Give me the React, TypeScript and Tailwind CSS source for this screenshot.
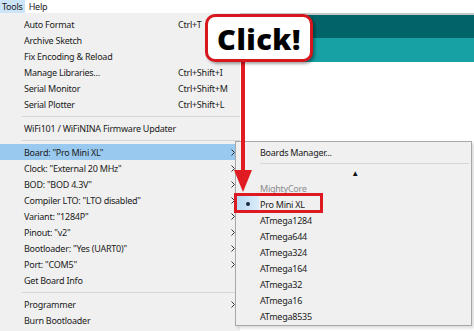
import React from 'react';

type MenuItem =
  | { kind: 'sep' }
  | { kind: 'item'; label: string; shortcut?: string; arrow?: boolean; active?: boolean };

const mainItems: MenuItem[] = [
  { kind: 'item', label: 'Auto Format', shortcut: 'Ctrl+T' },
  { kind: 'item', label: 'Archive Sketch' },
  { kind: 'item', label: 'Fix Encoding & Reload' },
  { kind: 'item', label: 'Manage Libraries...', shortcut: 'Ctrl+Shift+I' },
  { kind: 'item', label: 'Serial Monitor', shortcut: 'Ctrl+Shift+M' },
  { kind: 'item', label: 'Serial Plotter', shortcut: 'Ctrl+Shift+L' },
  { kind: 'sep' },
  { kind: 'item', label: 'WiFi101 / WiFiNINA Firmware Updater' },
  { kind: 'sep' },
  { kind: 'item', label: 'Board: "Pro Mini XL"', arrow: true, active: true },
  { kind: 'item', label: 'Clock: "External 20 MHz"', arrow: true },
  { kind: 'item', label: 'BOD: "BOD 4.3V"', arrow: true },
  { kind: 'item', label: 'Compiler LTO: "LTO disabled"', arrow: true },
  { kind: 'item', label: 'Variant: "1284P"', arrow: true },
  { kind: 'item', label: 'Pinout: "v2"', arrow: true },
  { kind: 'item', label: 'Bootloader: "Yes (UART0)"', arrow: true },
  { kind: 'item', label: 'Port: "COM5"', arrow: true },
  { kind: 'item', label: 'Get Board Info' },
  { kind: 'sep' },
  { kind: 'item', label: 'Programmer', arrow: true },
  { kind: 'item', label: 'Burn Bootloader' },
];

const chips = ['ATmega1284', 'ATmega644', 'ATmega324', 'ATmega164', 'ATmega32', 'ATmega16', 'ATmega8535'];

const Chevron = () => (
  <svg width="4" height="7" viewBox="0 0 4 7" className="absolute right-[5px] top-[5px]">
    <path d="M0.5 0.5 L3.5 3.5 L0.5 6.5" fill="none" stroke="#333" strokeWidth="1" />
  </svg>
);

export default function App() {
  return (
    <div className="relative w-[474px] h-[331px] overflow-hidden bg-white text-[#1b1b1b] font-['Noto_Sans',sans-serif] text-[9px] tracking-[-0.25px] leading-none">
      {/* menu bar */}
      <div className="flex h-[13px] items-center">
        <div className="h-full px-[2px] flex items-center bg-[#cce4f7]">Tools</div>
        <div className="px-[4px]">Help</div>
      </div>

      <div className="flex">
        {/* main dropdown */}
        <div className="w-[240px] bg-[#f0f0f0] pt-[3px] pb-[4px]">
          {mainItems.map((it, i) =>
            it.kind === 'sep' ? (
              <div key={i} className="h-[8px] flex items-center pl-[22px]">
                <div className="h-px w-full bg-[#d7d7d7]" />
              </div>
            ) : (
              <div
                key={i}
                className={`relative h-[16px] flex items-center pl-[24px] ${it.active ? 'bg-[#99c9ef]' : ''}`}
              >
                <span className="w-[154px] whitespace-nowrap">{it.label}</span>
                {it.shortcut && <span className="whitespace-nowrap">{it.shortcut}</span>}
                {it.arrow && <Chevron />}
              </div>
            )
          )}
        </div>

        {/* IDE window behind */}
        <div className="flex-1 flex flex-col">
          <div className="h-[2px] bg-[#c8c8c8]" />
          <div className="h-[23px] bg-[#006468]" />
          <div className="h-[24px] bg-[#17a1a5]" />
          <div className="flex-1 bg-white" />
        </div>
      </div>

      {/* board submenu */}
      <div className="absolute left-[235px] top-[141px] w-[237px] h-[185px] bg-[#f0f0f0] border border-[#a8a8a8] pt-[2px] shadow-[2px_2px_3px_rgba(0,0,0,0.15)]">
        <div className="h-[16px] flex items-center pl-[24px]">Boards Manager...</div>
        <div className="h-[6px] flex items-center pl-[24px] pr-[2px]">
          <div className="h-px w-full bg-[#d7d7d7]" />
        </div>
        <div className="h-[14px] flex items-center justify-center pl-[3px] text-[8px] text-[#111]">▲</div>
        <div className="h-[16px] flex items-center pl-[24px] text-[#8d8d8d]">MightyCore</div>
        <div className="h-[16px] flex items-center">
          <div className="w-[22px] h-full ml-[1px] bg-gradient-to-r from-[#b7d9f4] to-[#dcecf9] flex items-center justify-center">
            <div className="w-[4px] h-[4px] rounded-full bg-[#1b2b3b]" />
          </div>
          <span className="pl-[1px]">Pro Mini XL</span>
        </div>
        {chips.map((c) => (
          <div key={c} className="h-[16px] flex items-center pl-[24px]">{c}</div>
        ))}
      </div>

      {/* red highlight box */}
      <div className="absolute left-[234px] top-[193px] w-[89px] h-[20px] border-[3px] border-[#dd1a21]" />

      {/* red arrow */}
      <svg className="absolute left-[232px] top-[58px]" width="22" height="136" viewBox="0 0 22 136">
        <rect x="9" y="0" width="4" height="114" fill="#e01b22" />
        <path d="M2 112 L20 112 L11 134 Z" fill="#e01b22" />
      </svg>

      {/* callout */}
      <div className="absolute left-[205px] top-[14px] w-[108px] h-[48px] rounded-[10px] border-[3px] border-[#d7161d] bg-white flex items-center justify-center shadow-[2px_2px_3px_rgba(0,0,0,0.35)]">
        <span className="font-['Open_Sans',sans-serif] font-extrabold text-[29px] text-black tracking-[0.5px]">Click!</span>
      </div>
    </div>
  );
}
